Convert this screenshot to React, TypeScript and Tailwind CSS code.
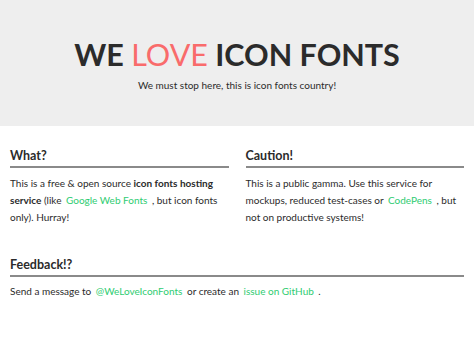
import React from 'react'

const Link = ({ children }: { children: React.ReactNode }) => (
  <a href="#" className="px-[2px] text-[#2ecc71]">
    {children}
  </a>
)

const Heading = ({ children }: { children: React.ReactNode }) => (
  <h2 className="border-b-2 border-[#8a8a8a] pb-[2px] text-[12.5px] font-bold leading-[16px] text-[#2b2b2b]">
    {children}
  </h2>
)

export default function App() {
  return (
    <div className="min-h-[353px] bg-white font-['Lato','Liberation_Sans',sans-serif] text-[#2b2b2b]">
      {/* Hero */}
      <header className="flex h-[126px] flex-col items-center bg-[#eeeeee] pt-[36px]">
        <h1 className="text-[30.5px] font-bold leading-[36px] text-[#2b2b2b]">
          WE <span className="font-normal text-[#f96b6b]">LOVE</span> ICON FONTS
        </h1>
        <p className="mt-[6px] text-[10px] leading-[14px]">We must stop here, this is icon fonts country!</p>
      </header>

      {/* Content */}
      <main className="px-[10px] pt-[22px]">
        <div className="grid grid-cols-2 gap-[17px]">
          <section>
            <Heading>What?</Heading>
            <p className="mt-[7px] text-[10px] leading-[17px]">
              This is a free &amp; open source <b>icon fonts hosting service</b> (like{' '}
              <Link>Google Web Fonts</Link> , but icon fonts only). Hurray!
            </p>
          </section>
          <section>
            <Heading>Caution!</Heading>
            <p className="mt-[7px] text-[10px] leading-[17px]">
              This is a public gamma. Use this service for mockups, reduced test-cases or{' '}
              <Link>CodePens</Link> , but not on productive systems!
            </p>
          </section>
        </div>
        <section className="mt-[31px]">
          <Heading>Feedback!?</Heading>
          <p className="mt-[6px] text-[10px] leading-[17px]">
            Send a message to <Link>@WeLoveIconFonts</Link> or create an <Link>issue on GitHub</Link> .
          </p>
        </section>
      </main>
    </div>
  )
}
